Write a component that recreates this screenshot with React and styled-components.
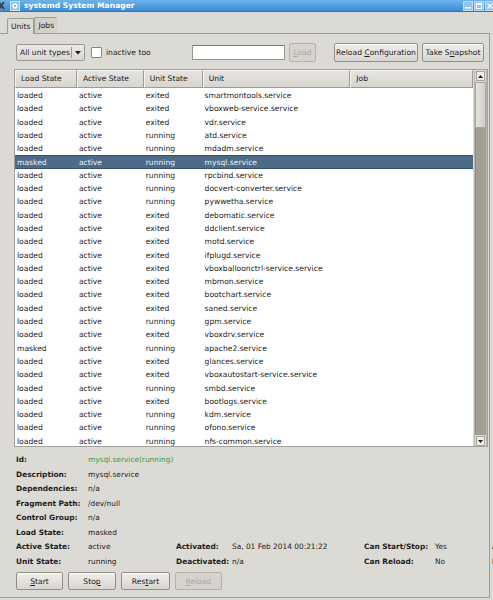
import React from "react";
import styled, { createGlobalStyle } from "styled-components";

const units = [
  ["loaded", "active", "exited", "smartmontools.service"],
  ["loaded", "active", "exited", "vboxweb-service.service"],
  ["loaded", "active", "exited", "vdr.service"],
  ["loaded", "active", "running", "atd.service"],
  ["loaded", "active", "running", "mdadm.service"],
  ["masked", "active", "running", "mysql.service"],
  ["loaded", "active", "running", "rpcbind.service"],
  ["loaded", "active", "running", "docvert-converter.service"],
  ["loaded", "active", "running", "pywwetha.service"],
  ["loaded", "active", "exited", "debomatic.service"],
  ["loaded", "active", "exited", "ddclient.service"],
  ["loaded", "active", "exited", "motd.service"],
  ["loaded", "active", "exited", "ifplugd.service"],
  ["loaded", "active", "exited", "vboxballoonctrl-service.service"],
  ["loaded", "active", "exited", "mbmon.service"],
  ["loaded", "active", "exited", "bootchart.service"],
  ["loaded", "active", "exited", "saned.service"],
  ["loaded", "active", "running", "gpm.service"],
  ["loaded", "active", "exited", "vboxdrv.service"],
  ["masked", "active", "running", "apache2.service"],
  ["loaded", "active", "exited", "glances.service"],
  ["loaded", "active", "exited", "vboxautostart-service.service"],
  ["loaded", "active", "running", "smbd.service"],
  ["loaded", "active", "exited", "bootlogs.service"],
  ["loaded", "active", "running", "kdm.service"],
  ["loaded", "active", "running", "ofono.service"],
  ["loaded", "active", "running", "nfs-common.service"],
];

const columns = [
  ["Load State", 62],
  ["Active State", 67],
  ["Unit State", 59],
  ["Unit", 148],
  ["Job", 123],
];

const GlobalStyle = createGlobalStyle`
  html, body {
    margin: 0;
    padding: 0;
    background: #dcdad5;
  }
  body {
    font-family: "DejaVu Sans", "Liberation Sans", sans-serif;
    font-size: 7.5px;
    color: #1c1c1c;
  }
`;

const App = () => {
  return (
    <Window>
      <GlobalStyle />
      <TitleBar>
        <AppIcon>
          <svg width="6" height="9" viewBox="0 0 6 9">
            <path d="M0 1 L5 8 M5 1 L0 8" stroke="#3a3a3a" strokeWidth="1.6" />
          </svg>
        </AppIcon>
        <MenuIcon>
          <svg width="6" height="6" viewBox="0 0 6 6">
            <circle cx="3" cy="3" r="2" fill="none" stroke="#fff" strokeWidth="1.4" />
          </svg>
        </MenuIcon>
        <TitleText>systemd System Manager</TitleText>
        <WinButtons>
          <WinButton>
            <svg width="6" height="6" viewBox="0 0 6 6">
              <rect x="0" y="4" width="6" height="1.5" fill="#fff" />
            </svg>
          </WinButton>
          <WinButton>
            <svg width="6" height="6" viewBox="0 0 6 6">
              <rect x="0.5" y="0.5" width="5" height="5" fill="none" stroke="#fff" />
              <rect x="0.5" y="0.5" width="5" height="1.5" fill="#fff" />
            </svg>
          </WinButton>
          <WinButton>
            <svg width="6" height="6" viewBox="0 0 6 6">
              <path d="M0.5 0.5 L5.5 5.5 M5.5 0.5 L0.5 5.5" stroke="#fff" strokeWidth="1.3" />
            </svg>
          </WinButton>
        </WinButtons>
      </TitleBar>

      <TabRow>
        <Tab $active>Units</Tab>
        <Tab>Jobs</Tab>
      </TabRow>

      <Pane>
        <Toolbar>
          <Combo>
            <ComboText>All unit types</ComboText>
            <ComboArrow>
              <svg width="6" height="4" viewBox="0 0 6 4">
                <path d="M0 0 L6 0 L3 3.5 Z" fill="#1c1c1c" />
              </svg>
            </ComboArrow>
          </Combo>
          <CheckBox />
          <CheckLabel>inactive too</CheckLabel>
          <Spacer />
          <SearchInput />
          <Button $w={27} $h={19} disabled>
            <u>L</u>oad
          </Button>
          <Button $w={84} $h={19} style={{ marginLeft: 18 }}>
            Reload <u>C</u>onfiguration
          </Button>
          <Button $w={62} $h={19} style={{ marginLeft: 4 }}>
            Take S<u>n</u>apshot
          </Button>
        </Toolbar>

        <TableFrame>
          <TableMain>
            <HeaderRow>
              {columns.map(([name, w]) => (
                <HeaderCell key={name} $w={w}>
                  {name}
                </HeaderCell>
              ))}
            </HeaderRow>
            <Body>
              {units.map((u) => (
                <Row key={u[3]} $selected={u[3] === "mysql.service"}>
                  {u.map((v, i) => (
                    <Cell key={i} $w={columns[i][1]}>
                      {v}
                    </Cell>
                  ))}
                  <Cell $w={columns[4][1]} />
                </Row>
              ))}
            </Body>
          </TableMain>
          <ScrollBar>
            <ScrollBtn>
              <svg width="5" height="3" viewBox="0 0 5 3">
                <path d="M0 3 L5 3 L2.5 0 Z" fill="#222" />
              </svg>
            </ScrollBtn>
            <Thumb />
            <Trough />
            <ScrollBtn>
              <svg width="5" height="3" viewBox="0 0 5 3">
                <path d="M0 0 L5 0 L2.5 3 Z" fill="#222" />
              </svg>
            </ScrollBtn>
          </ScrollBar>
        </TableFrame>

        <Details>
          <DetailRow>
            <Label>Id:</Label>
            <Value $color="#3c9a3c">mysql.service(running)</Value>
          </DetailRow>
          <DetailRow>
            <Label>Description:</Label>
            <Value>mysql.service</Value>
          </DetailRow>
          <DetailRow>
            <Label>Dependencies:</Label>
            <Value>n/a</Value>
          </DetailRow>
          <DetailRow>
            <Label>Fragment Path:</Label>
            <Value>/dev/null</Value>
          </DetailRow>
          <DetailRow>
            <Label>Control Group:</Label>
            <Value>n/a</Value>
          </DetailRow>
          <DetailRow>
            <Label>Load State:</Label>
            <Value>masked</Value>
          </DetailRow>
          <DetailRow>
            <Label>Active State:</Label>
            <Value $w={88}>active</Value>
            <Label $w={56}>Activated:</Label>
            <Value $w={132}>Sa, 01 Feb 2014 00:21:22</Value>
            <Label $w={71}>Can Start/Stop:</Label>
            <Value $w={57}>Yes</Value>
            <Label>Active</Label>
          </DetailRow>
          <DetailRow>
            <Label>Unit State:</Label>
            <Value $w={88}>running</Value>
            <Label $w={56}>Deactivated:</Label>
            <Value $w={132}>n/a</Value>
            <Label $w={71}>Can Reload:</Label>
            <Value $w={57}>No</Value>
            <Label>Inactive</Label>
          </DetailRow>
        </Details>

        <ButtonRow>
          <Button $w={47} $h={18}>
            <u>S</u>tart
          </Button>
          <Button $w={48} $h={18}>
            Sto<u>p</u>
          </Button>
          <Button $w={49} $h={18}>
            Res<u>t</u>art
          </Button>
          <Button $w={47} $h={18} disabled>
            <u>R</u>eload
          </Button>
        </ButtonRow>
      </Pane>
    </Window>
  );
};

const Window = styled.div`
  width: 493px;
  height: 600px;
  overflow: hidden;
  display: flex;
  flex-direction: column;
  background: #dcdad5;
`;

const TitleBar = styled.div`
  height: 11px;
  display: flex;
  align-items: center;
  background: linear-gradient(#6db3ea, #3a8dd6);
  border-bottom: 1px solid #2f77b8;
`;

const AppIcon = styled.div`
  width: 6px;
  height: 11px;
  margin-left: -1px;
  display: flex;
  align-items: center;
`;

const MenuIcon = styled.div`
  width: 8px;
  height: 8px;
  margin-left: 5px;
  background: #8cc4ee;
  border: 1px solid #cfe6f8;
  display: flex;
  align-items: center;
  justify-content: center;
`;

const TitleText = styled.div`
  margin-left: 4px;
  color: #fff;
  font-weight: bold;
  font-size: 7.6px;
  line-height: 11px;
`;

const WinButtons = styled.div`
  margin-left: auto;
  margin-right: -2px;
  display: flex;
  gap: 1px;
`;

const WinButton = styled.div`
  width: 8px;
  height: 8px;
  background: #8cc4ee;
  border: 1px solid #bfdcf4;
  display: flex;
  align-items: center;
  justify-content: center;
`;

const TabRow = styled.div`
  height: 21px;
  display: flex;
  align-items: flex-end;
  padding-left: 7px;
`;

const Tab = styled.div`
  height: 15px;
  line-height: 15px;
  padding: 0 3px;
  border: 1px solid #a09d97;
  border-bottom: none;
  border-right: ${(p) => (p.$active ? "1px solid #a09d97" : "none")};
  background: ${(p) => (p.$active ? "#dcdad5" : "#d4d1cc")};
  border-radius: 2px 2px 0 0;
  font-size: 7.6px;
  margin-bottom: ${(p) => (p.$active ? "-1px" : "0")};
  position: relative;
`;

const Pane = styled.div`
  flex: 1;
  border-top: 1px solid #a09d97;
  border-right: 1px solid #a09d97;
  width: 490px;
  box-sizing: border-box;
  padding: 9px 0 0 14px;
  display: flex;
  flex-direction: column;
  border-bottom: 1px solid #a09d97;
  margin-bottom: 2px;
`;

const Toolbar = styled.div`
  height: 19px;
  display: flex;
  align-items: center;
  padding-left: 2px;
  width: 468px;
`;

const Combo = styled.div`
  width: 69px;
  height: 17px;
  box-sizing: border-box;
  border: 1px solid #9a9791;
  border-radius: 2px;
  background: linear-gradient(#eceae6, #dad7d2);
  display: flex;
  align-items: center;
`;

const ComboText = styled.div`
  flex: 1;
  padding-left: 3px;
  font-size: 7.6px;
  white-space: nowrap;
`;

const ComboArrow = styled.div`
  width: 12px;
  height: 11px;
  border-left: 1px solid #9a9791;
  display: flex;
  align-items: center;
  justify-content: center;
`;

const CheckBox = styled.div`
  width: 9px;
  height: 9px;
  margin-left: 6px;
  border: 1px solid #8a8782;
  background: #fff;
  border-radius: 1px;
`;

const CheckLabel = styled.div`
  margin-left: 4px;
  font-size: 7.6px;
`;

const Spacer = styled.div`
  flex: 1;
`;

const SearchInput = styled.div`
  width: 91px;
  height: 13px;
  background: #fff;
  border: 1px solid #9a9791;
  border-top-color: #7f7c77;
  margin-right: 4px;
`;

const Button = styled.button`
  width: ${(p) => p.$w}px;
  height: ${(p) => p.$h}px;
  box-sizing: border-box;
  padding: 0;
  font-family: "DejaVu Sans", "Liberation Sans", sans-serif;
  font-size: 7.6px;
  color: #1c1c1c;
  border: 1px solid #928f89;
  border-radius: 2px;
  background: linear-gradient(#f0eeeb, #d9d6d1);
  box-shadow: inset 0 1px 0 #fbfaf9;
  white-space: nowrap;
  flex-shrink: 0;
  &:disabled {
    color: #aaa7a1;
    background: #d6d3ce;
    border-color: #b5b2ac;
    box-shadow: none;
  }
`;

const TableFrame = styled.div`
  margin-top: 7px;
  width: 474px;
  height: 378px;
  box-sizing: border-box;
  border: 1px solid #a3a09a;
  display: flex;
  background: #dcdad5;
`;

const TableMain = styled.div`
  width: 460px;
  display: flex;
  flex-direction: column;
  overflow: hidden;
`;

const HeaderRow = styled.div`
  display: flex;
  height: 18px;
  flex-shrink: 0;
`;

const HeaderCell = styled.div`
  width: ${(p) => p.$w}px;
  box-sizing: border-box;
  border: 1px solid #9d9a94;
  border-left-color: #f4f3f1;
  border-top-color: #f4f3f1;
  background: linear-gradient(#e6e4e0, #d8d5d0);
  padding-left: 5px;
  line-height: 16px;
  font-size: 7.6px;
  white-space: nowrap;
`;

const Body = styled.div`
  flex: 1;
  background: #fff;
  overflow: hidden;
  padding-top: 1px;
`;

const Row = styled.div`
  display: flex;
  height: 13.3px;
  line-height: 13.3px;
  background: ${(p) => (p.$selected ? "#4b6b88" : "#fff")};
  color: ${(p) => (p.$selected ? "#eef2f6" : "#1c1c1c")};
  border-top: ${(p) => (p.$selected ? "1px solid #35506a" : "none")};
  border-bottom: ${(p) => (p.$selected ? "1px solid #35506a" : "none")};
  box-sizing: border-box;
`;

const Cell = styled.div`
  width: ${(p) => p.$w}px;
  padding-left: 2px;
  font-size: 7.6px;
  white-space: nowrap;
  overflow: hidden;
  box-sizing: border-box;
`;

const ScrollBar = styled.div`
  width: 11px;
  margin-left: 1px;
  display: flex;
  flex-direction: column;
  border-left: 1px solid #b9b6b0;
  border-right: 1px solid #b9b6b0;
`;

const ScrollBtn = styled.div`
  height: 8px;
  margin: 1px 1px 0;
  background: #eeece9;
  border: 1px solid #a9a6a0;
  display: flex;
  align-items: center;
  justify-content: center;
`;

const Thumb = styled.div`
  height: 44px;
  margin-top: 1px;
  background: linear-gradient(90deg, #e4e2de, #d2cfca);
  border: 1px solid #a9a6a0;
`;

const Trough = styled.div`
  flex: 1;
  background: #a39f95;
  border-left: 1px solid #8e8a80;
`;

const Details = styled.div`
  margin-top: 6px;
  padding-left: 2px;
  display: flex;
  flex-direction: column;
`;

const DetailRow = styled.div`
  display: flex;
  height: 14.5px;
  line-height: 14.5px;
  white-space: nowrap;
`;

const Label = styled.div`
  width: ${(p) => (p.$w ? `${p.$w}px` : "72px")};
  flex-shrink: 0;
  font-weight: bold;
  font-size: 7.4px;
`;

const Value = styled.div`
  width: ${(p) => (p.$w ? `${p.$w}px` : "auto")};
  flex-shrink: 0;
  font-size: 7.4px;
  color: ${(p) => p.$color || "#1c1c1c"};
`;

const ButtonRow = styled.div`
  display: flex;
  gap: 5px;
  margin-top: 3px;
  padding-left: 2px;
`;

export default App;
